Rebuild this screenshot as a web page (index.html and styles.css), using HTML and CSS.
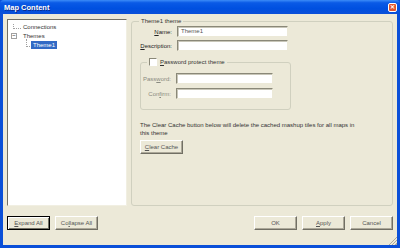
FILE: index.html
```html
<!DOCTYPE html>
<html lang="en">
<head>
  <meta charset="UTF-8" />
  <title>Map Content</title>
  <link rel="stylesheet" href="styles.css">
</head>
<body>
  <div class="window">
    <div class="titlebar">
      <span class="title">Map Content</span>
      <span class="close">&#x2715;</span>
    </div>

    <div class="client">
      <div class="main">
        <div class="tree">
          <div class="node top"><span class="branch"></span><span class="text">Connections</span></div>
          <div class="node"><span class="expander">&minus;</span><span class="text">Themes</span></div>
          <div class="node child"><span class="elbow"></span><span class="text selected">Theme1</span></div>
        </div>

        <fieldset class="group theme">
          <legend>Theme1 theme</legend>
          <div class="row">
            <span class="label"><u>N</u>ame:</span>
            <div class="field wide">Theme1</div>
          </div>
          <div class="row">
            <span class="label"><u>D</u>escription:</span>
            <div class="field wide"></div>
          </div>

          <fieldset class="group pwd">
            <legend><span class="check"></span><span><u>P</u>assword protect theme</span></legend>
            <div class="row">
              <span class="label disabled">Pass<u>w</u>ord:</span>
              <div class="field"></div>
            </div>
            <div class="row">
              <span class="label disabled">Con<u>f</u>irm:</span>
              <div class="field"></div>
            </div>
          </fieldset>

          <p class="note">The Clear Cache button below will delete the cached mashup tiles for all maps in this theme</p>
          <div class="btn"><u>C</u>lear Cache</div>
        </fieldset>
      </div>

      <div class="buttons">
        <div class="btn default"><u>E</u>xpand All</div>
        <div class="btn">Co<u>l</u>lapse All</div>
        <div class="spacer"></div>
        <div class="btn">OK</div>
        <div class="btn"><u>A</u>pply</div>
        <div class="btn">Cancel</div>
      </div>
      <div class="grip"></div>
    </div>
  </div>
</body>
</html>
```

FILE: styles.css
```css
html, body {
  margin: 0;
  padding: 0;
  background: #fff;
}

.window {
  width: 400px;
  height: 248px;
  box-sizing: border-box;
  background: #0a4fd8;
  display: flex;
  flex-direction: column;
  padding: 0 3px 3px 3px;
  font-family: "Liberation Sans", Arial, sans-serif;
  font-size: 6px;
  color: #000;
}

.titlebar {
  height: 14px;
  margin: 0 -3px;
  padding: 0 4px;
  display: flex;
  align-items: center;
  justify-content: space-between;
  background: linear-gradient(#3c8cf8 0%, #0a5ae6 20%, #0050e0 60%, #0a4fd8 100%);
  border-radius: 4px 4px 0 0;
}

.title {
  color: #fff;
  font-weight: bold;
  font-size: 7.5px;
  text-shadow: 1px 1px 0 #0a2a8a;
}

.close {
  width: 9px;
  height: 9px;
  box-sizing: border-box;
  border: 1px solid #fff;
  border-radius: 2px;
  background: #e0552d;
  color: #fff;
  font-size: 6px;
  font-weight: bold;
  line-height: 7px;
  text-align: center;
  margin-right: -1px;
}

.client {
  flex: 1;
  background: #ece9d8;
  display: flex;
  flex-direction: column;
  padding: 3px 4px 0 4px;
  position: relative;
}

.main {
  display: flex;
  gap: 4px;
  height: 189px;
}

.tree {
  width: 120px;
  margin-top: 2px;
  height: 187px;
  box-sizing: border-box;
  background: #fff;
  border: 1px solid;
  border-color: #716f64 #f1efe2 #f1efe2 #716f64;
  padding: 2px 0 0 3px;
}

.node {
  height: 9px;
  display: flex;
  align-items: center;
}

.branch {
  width: 8px;
  height: 5px;
  margin-left: 2px;
  margin-top: 4px;
  box-sizing: border-box;
  border-left: 1px dotted #a0a0a0;
  border-bottom: 1px dotted #a0a0a0;
  margin-bottom: 4px;
}

.expander {
  width: 6px;
  height: 6px;
  margin-right: 4px;
  box-sizing: border-box;
  border: 1px solid #a0a0a0;
  font-size: 6px;
  line-height: 3px;
  text-align: center;
  color: #000;
}

.child {
  padding-left: 15px;
}

.elbow {
  width: 4px;
  height: 8px;
  margin-top: -4px;
  box-sizing: border-box;
  border-left: 1px dotted #a0a0a0;
  border-bottom: 1px dotted #a0a0a0;
}

.text {
  padding: 0 1px;
  margin-left: 1px;
  line-height: 8px;
  color: #333;
}

.selected {
  background: #316ac5;
  color: #fff;
  padding: 0 2px;
}

.group {
  margin: 0;
  border: 1px solid #d0d0bf;
  border-radius: 3px;
  min-width: 0;
}

.group legend {
  padding: 0 2px;
  line-height: 8px;
  color: #333;
  margin-left: -1px;
}

.theme {
  flex: 1;
  padding: 1px 6px 0 8px;
}

.row {
  display: flex;
  align-items: center;
  gap: 5px;
  margin-bottom: 3px;
}

.label {
  width: 32px;
  text-align: right;
  color: #222;
}

.disabled {
  color: #8a8a80;
}

.field {
  width: 97px;
  height: 11px;
  box-sizing: border-box;
  background: #fff;
  border: 1px solid;
  border-color: #8a8878 #ece9d8 #ece9d8 #8a8878;
  box-shadow: inset 1px 1px 0 #c8c6b8;
  padding: 0 3px;
  line-height: 9px;
  color: #555;
}

.wide {
  width: 111px;
}

.pwd {
  width: 151px;
  box-sizing: border-box;
  margin-top: 7px;
  padding: 7px 0 6px 0;
}

.pwd .row {
  margin-bottom: 4px;
}

.pwd legend {
  display: flex;
  align-items: center;
  gap: 3px;
  margin-left: 6px;
}

.pwd .label {
  width: 30px;
}

.check {
  width: 8px;
  height: 8px;
  box-sizing: border-box;
  background: #fff;
  border: 1px solid;
  border-color: #8a8878 #fff #fff #8a8878;
}

.note {
  margin: 11px 0 3px 0;
  width: 222px;
  line-height: 8px;
  color: #333;
}

.btn {
  width: 43px;
  height: 14px;
  box-sizing: border-box;
  border: 1px solid;
  border-color: #fff #716f64 #716f64 #fff;
  box-shadow: inset -1px -1px 0 #aca899;
  display: flex;
  align-items: center;
  justify-content: center;
  color: #555;
  background: #ece9d8;
}

.default {
  border: 1px solid #000;
  box-shadow: inset 1px 1px 0 #fff, inset -1px -1px 0 #716f64;
}

.buttons {
  display: flex;
  gap: 5px;
  margin-top: 10px;
}

.spacer {
  flex: 1;
}

.grip {
  position: absolute;
  right: 0;
  bottom: 0;
  width: 8px;
  height: 8px;
  background: linear-gradient(135deg, transparent 45%, #aca899 45%, #aca899 52%, transparent 52%, transparent 65%, #aca899 65%, #aca899 72%, transparent 72%, transparent 85%, #aca899 85%);
}
```
